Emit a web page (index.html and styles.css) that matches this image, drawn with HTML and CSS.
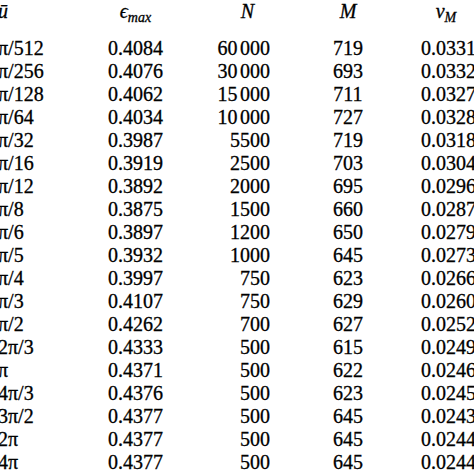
FILE: index.html
```html
<!DOCTYPE html>
<html>
<head>
<meta charset="utf-8">
<link rel="stylesheet" href="styles.css">
</head>
<body>
<table class="results">
  <colgroup>
    <col class="c-u"><col class="c-eps"><col class="c-n"><col class="c-m"><col class="c-nu">
  </colgroup>
  <thead>
    <tr>
      <th class="col-u"><i>ū</i></th>
      <th class="col-eps"><i>ϵ</i><sub>max</sub></th>
      <th class="col-n"><i>N</i></th>
      <th class="col-m"><i>M</i></th>
      <th class="col-nu"><i>ν</i><sub>M</sub></th>
    </tr>
  </thead>
  <tbody>
    <tr><td class="col-u">π/512</td><td class="col-eps">0.4084</td><td class="col-n">60<span class="ts"></span>000</td><td class="col-m">719</td><td class="col-nu">0.0331</td></tr>
    <tr><td class="col-u">π/256</td><td class="col-eps">0.4076</td><td class="col-n">30<span class="ts"></span>000</td><td class="col-m">693</td><td class="col-nu">0.0332</td></tr>
    <tr><td class="col-u">π/128</td><td class="col-eps">0.4062</td><td class="col-n">15<span class="ts"></span>000</td><td class="col-m">711</td><td class="col-nu">0.0327</td></tr>
    <tr><td class="col-u">π/64</td><td class="col-eps">0.4034</td><td class="col-n">10<span class="ts"></span>000</td><td class="col-m">727</td><td class="col-nu">0.0328</td></tr>
    <tr><td class="col-u">π/32</td><td class="col-eps">0.3987</td><td class="col-n">5500</td><td class="col-m">719</td><td class="col-nu">0.0318</td></tr>
    <tr><td class="col-u">π/16</td><td class="col-eps">0.3919</td><td class="col-n">2500</td><td class="col-m">703</td><td class="col-nu">0.0304</td></tr>
    <tr><td class="col-u">π/12</td><td class="col-eps">0.3892</td><td class="col-n">2000</td><td class="col-m">695</td><td class="col-nu">0.0296</td></tr>
    <tr><td class="col-u">π/8</td><td class="col-eps">0.3875</td><td class="col-n">1500</td><td class="col-m">660</td><td class="col-nu">0.0287</td></tr>
    <tr><td class="col-u">π/6</td><td class="col-eps">0.3897</td><td class="col-n">1200</td><td class="col-m">650</td><td class="col-nu">0.0279</td></tr>
    <tr><td class="col-u">π/5</td><td class="col-eps">0.3932</td><td class="col-n">1000</td><td class="col-m">645</td><td class="col-nu">0.0273</td></tr>
    <tr><td class="col-u">π/4</td><td class="col-eps">0.3997</td><td class="col-n">750</td><td class="col-m">623</td><td class="col-nu">0.0266</td></tr>
    <tr><td class="col-u">π/3</td><td class="col-eps">0.4107</td><td class="col-n">750</td><td class="col-m">629</td><td class="col-nu">0.0260</td></tr>
    <tr><td class="col-u">π/2</td><td class="col-eps">0.4262</td><td class="col-n">700</td><td class="col-m">627</td><td class="col-nu">0.0252</td></tr>
    <tr><td class="col-u">2π/3</td><td class="col-eps">0.4333</td><td class="col-n">500</td><td class="col-m">615</td><td class="col-nu">0.0249</td></tr>
    <tr><td class="col-u">π</td><td class="col-eps">0.4371</td><td class="col-n">500</td><td class="col-m">622</td><td class="col-nu">0.0246</td></tr>
    <tr><td class="col-u">4π/3</td><td class="col-eps">0.4376</td><td class="col-n">500</td><td class="col-m">623</td><td class="col-nu">0.0245</td></tr>
    <tr><td class="col-u">3π/2</td><td class="col-eps">0.4377</td><td class="col-n">500</td><td class="col-m">645</td><td class="col-nu">0.0243</td></tr>
    <tr><td class="col-u">2π</td><td class="col-eps">0.4377</td><td class="col-n">500</td><td class="col-m">645</td><td class="col-nu">0.0244</td></tr>
    <tr><td class="col-u">4π</td><td class="col-eps">0.4377</td><td class="col-n">500</td><td class="col-m">645</td><td class="col-nu">0.0244</td></tr>
  </tbody>
</table>
</body>
</html>
```

FILE: styles.css
```css
html, body {
  margin: 0;
  padding: 0;
  background: #fff;
  overflow: hidden;
}

.results {
  font-family: "Liberation Serif", "Times New Roman", serif;
  font-size: 20px;
  line-height: 23px;
  color: #000;
  -webkit-text-stroke: 0.3px #000;
  border-collapse: collapse;
  table-layout: fixed;
  width: 503px;
  margin-left: -2px;
}

.c-u { width: 102px; }
.c-eps { width: 71px; }
.c-n { width: 129px; }
.c-m { width: 96px; }
.c-nu { width: 105px; }

.results th,
.results td {
  padding: 0;
  font-weight: normal;
  white-space: nowrap;
  height: 23px;
}

.results th {
  padding-bottom: 14px;
}

.results i {
  font-style: italic;
}

.results sub {
  font-style: italic;
  font-size: 14px;
  line-height: 0;
  vertical-align: -4px;
}

.col-u { text-align: left; }
.col-eps { text-align: center; }
.col-n { text-align: right; padding-right: 30px !important; }
th.col-n { padding-right: 46px !important; }
.col-m { text-align: center; }
.col-nu { text-align: center; }
th.col-nu { padding-right: 5px !important; }

.ts {
  display: inline-block;
  width: 2.5px;
}
```
